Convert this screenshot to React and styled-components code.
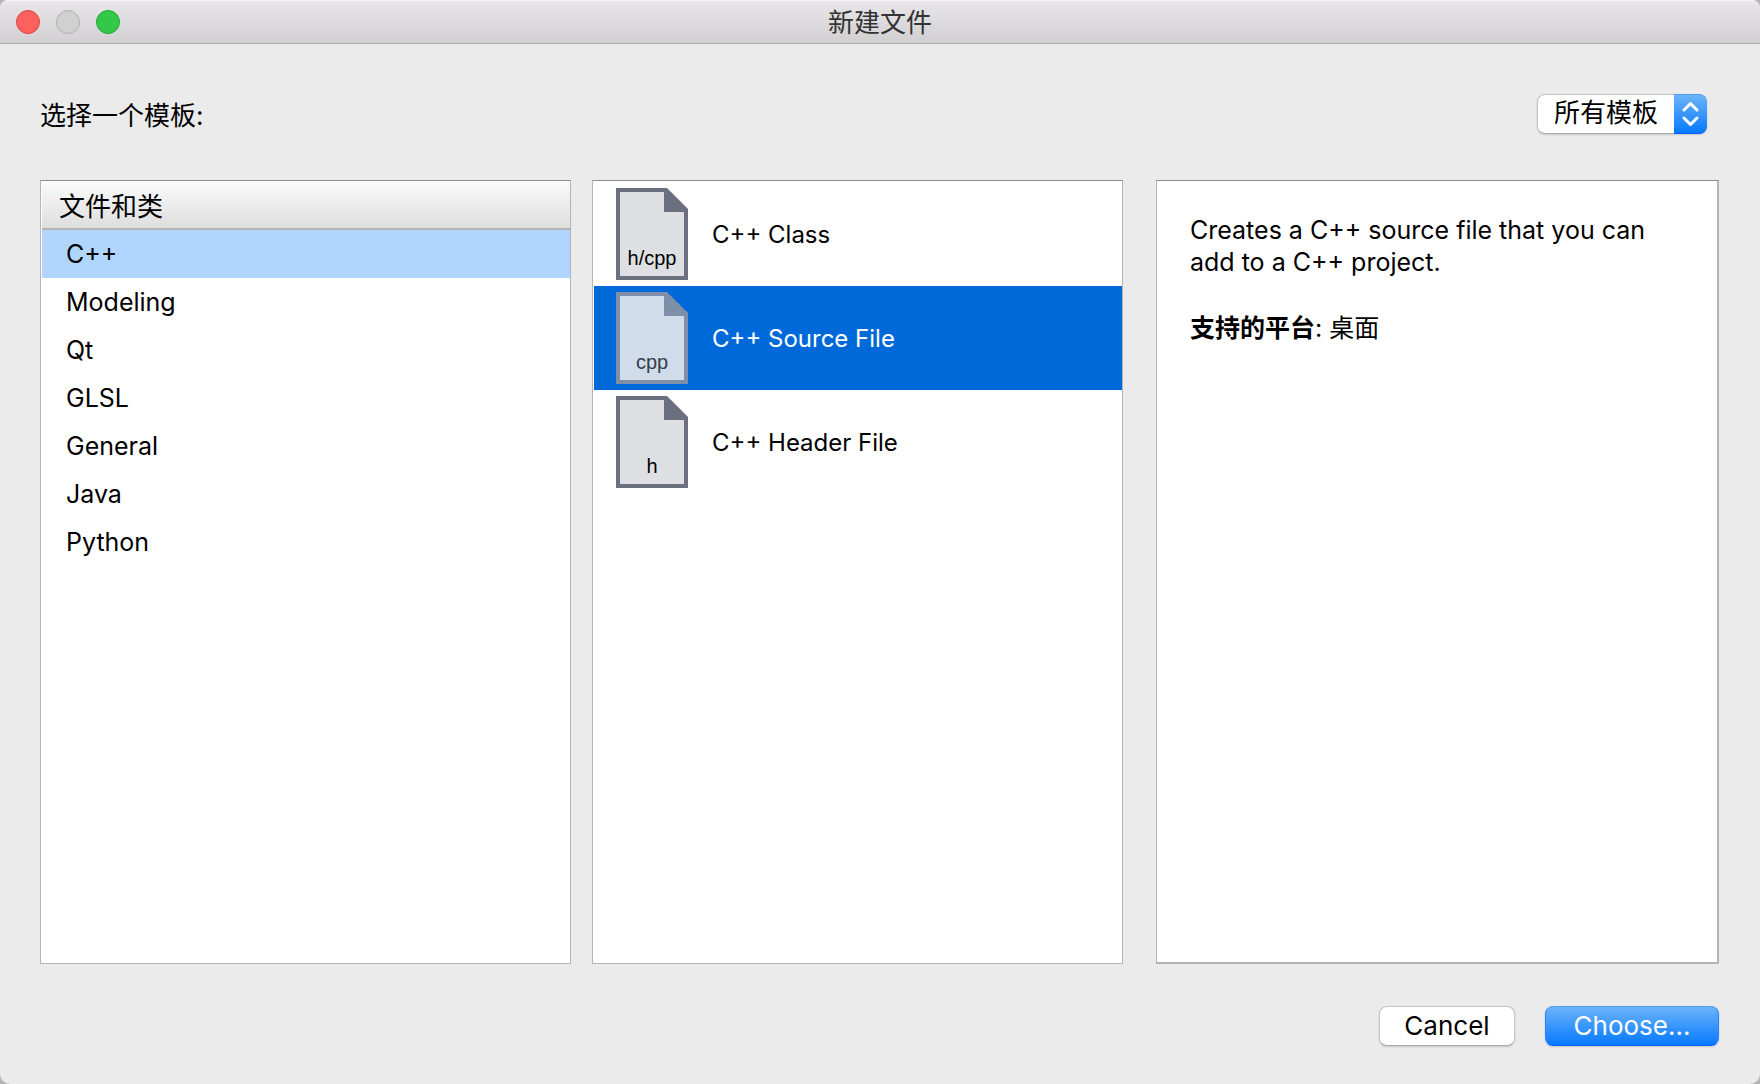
import React, { useState } from 'react';
import styled, { createGlobalStyle } from 'styled-components';

const GlobalStyle = createGlobalStyle`
  * {
    box-sizing: border-box;
  }

  body {
    margin: 0;
    background: #b4b4b4;
    font-family: Inter, 'Noto Sans CJK SC', sans-serif;
    font-size: 25px;
    color: #000;
  }

  button, select {
    font: inherit;
    color: inherit;
  }
`;

const Window = styled.div`
  min-height: 100vh;
  display: flex;
  flex-direction: column;
  background: #ebebeb;
  border-radius: 8px 8px 10px 10px;
  overflow: hidden;
`;

const TitleBar = styled.header`
  display: grid;
  grid-template-columns: 1fr auto 1fr;
  align-items: center;
  height: 44px;
  padding: 0 16px;
  background: linear-gradient(#e8e6e8, #d1cfd1);
  border-top: 1px solid #f5f4f5;
  border-bottom: 1px solid #acaaac;
`;

const Lights = styled.div`
  display: flex;
  gap: 16px;
`;

const Light = styled.button`
  width: 24px;
  height: 24px;
  padding: 0;
  border-radius: 50%;
  border: 1px solid ${(props) => props.$edge};
  background: ${(props) => props.$fill};
`;

const Title = styled.h1`
  margin: 0;
  padding-top: 2px;
  font-size: 26px;
  line-height: 40px;
  font-weight: 400;
  color: #333;
`;

const Content = styled.main`
  flex: 1;
  display: flex;
  flex-direction: column;
  padding: 50px 41px 38px 40px;
`;

const TopRow = styled.div`
  display: flex;
  justify-content: space-between;
  align-items: flex-start;
  padding-right: 12px;
  margin-bottom: 46px;
`;

const Label = styled.label`
  font-size: 26px;
  line-height: 44px;
  height: 40px;
`;

const SelectBox = styled.div`
  position: relative;
  display: flex;
  height: 40px;
  border-radius: 8px;
  box-shadow: 0 1px 2px rgba(0, 0, 0, 0.15);
`;

const Select = styled.select`
  appearance: none;
  width: 170px;
  height: 40px;
  padding: 0 48px 2px 16px;
  font-size: 26px;
  line-height: 36px;
  background: #fff;
  border: 1px solid #c4c4c4;
  border-bottom-color: #aaa;
  border-radius: 8px;
`;

const SelectArrow = styled.div`
  position: absolute;
  top: 0;
  right: 0;
  width: 33px;
  height: 40px;
  display: flex;
  align-items: center;
  justify-content: center;
  pointer-events: none;
  background: linear-gradient(#6cb3fa, #067aff);
  border-top: 1px solid #4f9ff5;
  border-bottom: 1px solid #0060ff;
  border-radius: 0 8px 8px 0;
`;

const Panels = styled.div`
  flex: 1;
  display: grid;
  grid-template-columns: minmax(0, 1083fr) minmax(0, 563fr);
  gap: 33px;
  margin-bottom: 42px;
`;

const Lists = styled.div`
  display: grid;
  grid-template-columns: repeat(2, minmax(0, 1fr));
  gap: 21px;
`;

const Panel = styled.section`
  background: #fff;
  border: 1px solid #b4b4b4;
  border-top-color: #8c8c8c;
`;

const ListPanel = styled(Panel)`
  padding: 1px 0 0 1px;
`;

const DetailPanel = styled(Panel)`
  padding: 33px;
  border-width: 1px 2px 2px 1px;
  line-height: 32px;
`;

const GroupTitle = styled.h2`
  margin: 0;
  padding: 0 17px;
  height: 48px;
  font-size: 26px;
  line-height: 49px;
  font-weight: 400;
  background: linear-gradient(#fafafa, #dedede);
  border-bottom: 2px solid #b2b2b2;
`;

const List = styled.ul`
  list-style: none;
  margin: 0;
  padding: 0;
`;

const Category = styled.button`
  display: block;
  width: 100%;
  height: 48px;
  padding: 0 24px;
  border: 0;
  text-align: left;
  background: ${(props) => (props.$active ? '#b0d6ff' : 'transparent')};
`;

const Template = styled.button`
  display: flex;
  align-items: center;
  gap: 24px;
  width: 100%;
  height: 104px;
  padding: 0 22px;
  border: 0;
  font-size: 24px;
  text-align: left;
  color: ${(props) => (props.$active ? '#fff' : '#000')};
  background: ${(props) => (props.$active ? '#0069d9' : 'transparent')};
`;

const Paragraph = styled.p`
  margin: 0 0 34px;
`;

const Buttons = styled.div`
  display: flex;
  justify-content: flex-end;
  gap: 30px;
`;

const Button = styled.button`
  height: 40px;
  min-width: ${(props) => (props.$primary ? '174px' : '136px')};
  padding: 0 16px;
  font-size: 26px;
  line-height: 36px;
  border-radius: 8px;
  box-shadow: 0 1px 2px rgba(0, 0, 0, 0.15);
  color: ${(props) => (props.$primary ? '#fff' : '#000')};
  background: ${(props) => (props.$primary ? 'linear-gradient(#6cb3fa, #067aff)' : '#fff')};
  border: 1px solid;
  border-color: ${(props) => (props.$primary ? '#4f9ff5 #2b85fa #0060ff' : '#c4c4c4 #c4c4c4 #aaa')};
`;

const FileSvg = styled.svg`
  flex: none;
  font-family: 'Liberation Sans', sans-serif;
  font-size: 20px;
`;

const FileIcon = ({ text, active }) => {
  const edge = active ? '#808fa8' : '#6b7080';

  return (
    <FileSvg width="72" height="92" viewBox="0 0 72 92" aria-hidden="true">
      <path d="M0 0H51L72 21V92H0Z" fill={edge} />
      <path d="M4 4H48V24H68V88H4Z" fill={active ? '#d1dcea' : '#dedfe2'} />
      <text x="36" y="77" textAnchor="middle" fill={active ? '#333f4c' : '#000'}>{text}</text>
    </FileSvg>
  );
};

const categories = ['C++', 'Modeling', 'Qt', 'GLSL', 'General', 'Java', 'Python'];

const templates = [
  { name: 'C++ Class', ext: 'h/cpp' },
  { name: 'C++ Source File', ext: 'cpp' },
  { name: 'C++ Header File', ext: 'h' },
];

const App = () => {
  const [category, setCategory] = useState('C++');
  const [template, setTemplate] = useState('C++ Source File');

  return (
    <>
      <GlobalStyle />
      <Window>
        <TitleBar>
          <Lights>
            <Light aria-label="Close" $fill="#fc615d" $edge="#e2443f" />
            <Light aria-label="Minimize" $fill="#d0d0d0" $edge="#b0aeb0" disabled />
            <Light aria-label="Zoom" $fill="#34c84a" $edge="#24a732" />
          </Lights>
          <Title>新建文件</Title>
        </TitleBar>

        <Content>
          <TopRow>
            <Label htmlFor="platform">选择一个模板:</Label>
            <SelectBox>
              <Select id="platform">
                <option>所有模板</option>
              </Select>
              <SelectArrow>
                <svg width="17" height="26" viewBox="0 0 17 26" fill="none" stroke="#fff" strokeWidth="3" strokeLinecap="round" strokeLinejoin="round">
                  <path d="M2 9L8.500 2.500L15 9M2 17L8.500 23.500L15 17" />
                </svg>
              </SelectArrow>
            </SelectBox>
          </TopRow>

          <Panels>
            <Lists>
              <ListPanel>
                <GroupTitle>文件和类</GroupTitle>
                <List>
                  {categories.map((name) => (
                    <li key={name}>
                      <Category $active={name === category} onClick={() => setCategory(name)}>{name}</Category>
                    </li>
                  ))}
                </List>
              </ListPanel>

              <ListPanel>
                <List>
                  {templates.map(({ name, ext }) => (
                    <li key={name}>
                      <Template $active={name === template} onClick={() => setTemplate(name)}>
                        <FileIcon text={ext} active={name === template} />
                        {name}
                      </Template>
                    </li>
                  ))}
                </List>
              </ListPanel>
            </Lists>

            <DetailPanel>
              <Paragraph>Creates a C++ source file that you can add to a C++ project.</Paragraph>
              <Paragraph><b>支持的平台</b>: 桌面</Paragraph>
            </DetailPanel>
          </Panels>

          <Buttons>
            <Button>Cancel</Button>
            <Button $primary>Choose...</Button>
          </Buttons>
        </Content>
      </Window>
    </>
  );
};

export default App;
